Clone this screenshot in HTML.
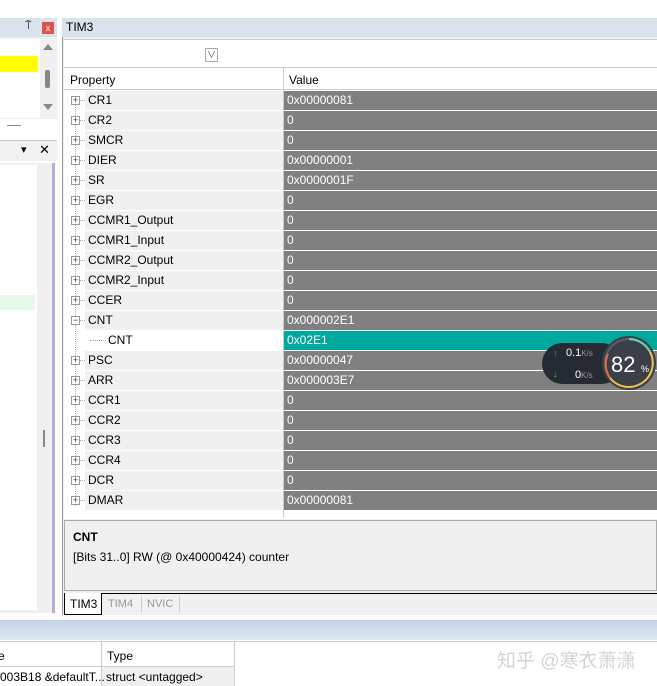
<!DOCTYPE html>
<html><head><meta charset="utf-8"><style>
*{margin:0;padding:0;box-sizing:border-box}
body{width:657px;height:686px;overflow:hidden;background:#fff;position:relative;font-family:"Liberation Sans","Noto Sans CJK SC",sans-serif;font-size:12px;color:#000}
.a{position:absolute}
.row{position:absolute;left:62px;width:595px;height:20px}
.row .ic{position:absolute;left:71px}
.nm{position:absolute;left:85px;width:198px;height:19px;background:#f0f0f0;padding-left:3px;line-height:19px}
.val{position:absolute;left:284px;width:373px;height:19px;background:#808080;color:#fff;padding-left:3px;line-height:19px}
.pl{position:absolute;left:71px;width:9px;height:9px;border:1px solid #999;background:#fff;font-size:9px;line-height:7px;text-align:center;color:#333}
</style></head><body>
<!-- left panel -->
<div class="a" style="left:0;top:18px;width:57px;height:19px;background:#dae2ec"></div>
<div class="a" style="left:25px;top:20px;font-size:11px">&#x2351;</div>
<div class="a" style="left:42px;top:22px;width:12px;height:12px;background:#d9534f;color:#fff;font-size:9px;line-height:12px;text-align:center">x</div>
<div class="a" style="left:0;top:37px;width:57px;height:82px;background:#f0f0f0"></div>
<div class="a" style="left:0;top:39px;width:40px;height:79px;background:#fff"></div>
<div class="a" style="left:0;top:56px;width:38px;height:16px;background:#ffff00"></div>
<div class="a" style="left:43px;top:44px;width:0;height:0;border:5px solid transparent;border-bottom:6px solid #888;border-top:0"></div>
<div class="a" style="left:45px;top:70px;width:5px;height:18px;background:#888;border-radius:2px"></div>
<div class="a" style="left:43px;top:104px;width:0;height:0;border:5px solid transparent;border-top:6px solid #888;border-bottom:0"></div>
<div class="a" style="left:7px;top:125px;width:14px;height:1px;background:#888"></div>
<div class="a" style="left:0;top:140px;width:57px;height:21px;background:#f2f2f2;border-top:1px solid #ccc"></div>
<div class="a" style="left:21px;top:143px;font-size:11px">&#x25BE;</div>
<div class="a" style="left:39px;top:142px;font-size:13px">&#x2715;</div>
<div class="a" style="left:0;top:163px;width:55px;height:450px;background:#f0f0f0;border-right:3px solid #b7aed0"></div>
<div class="a" style="left:0;top:165px;width:37px;height:445px;background:#fff"></div>
<div class="a" style="left:0;top:295px;width:35px;height:15px;background:#e6f9e6"></div>
<div class="a" style="left:43px;top:430px;width:2px;height:17px;background:#888"></div>
<!-- main panel -->
<div class="a" style="left:62px;top:18px;width:595px;height:19px;background:#dae2ec;padding-left:4px;line-height:19px">TIM3</div>
<div class="a" style="left:62px;top:37px;width:595px;height:578px;background:#f0f0f0;border-left:1px solid #999"></div>
<div class="a" style="left:64px;top:39px;width:593px;height:480px;background:#fff;border-top:1px solid #ccc"></div>
<div class="a" style="left:205px;top:48px;width:13px;height:14px;border:1px solid #aaa;background:#fff;font-size:9px;text-align:center;line-height:12px;color:#555">&#x2228;</div>
<div class="a" style="left:64px;top:67px;width:593px;height:23px;border-top:1px solid #ccc;border-bottom:1px solid #ccc"></div>
<div class="a" style="left:70px;top:73px">Property</div>
<div class="a" style="left:289px;top:73px">Value</div>
<div class="a" style="left:283px;top:68px;width:1px;height:450px;background:#ccc"></div>
<div class="a" style="left:75px;top:96px;width:0;height:410px;border-left:1px dotted #aaa"></div>
<div id="rows"></div>
<!-- description -->
<div class="a" style="left:64px;top:520px;width:593px;height:71px;background:#f0f0f0;border:1px solid #aaa"></div>
<div class="a" style="left:73px;top:530px;font-weight:bold">CNT</div>
<div class="a" style="left:73px;top:550px">[Bits 31..0] RW (@ 0x40000424) counter</div>
<div class="a" style="left:64px;top:593px;width:593px;height:1px;background:#000"></div>
<div class="a" style="left:64px;top:593px;width:38px;height:22px;background:#fff;border:1px solid #000;border-top:0;padding-left:5px;line-height:22px">TIM3</div>
<div class="a" style="left:108px;top:598px;color:#999;font-size:11px">TIM4</div>
<div class="a" style="left:141px;top:596px;width:1px;height:16px;background:#ccc"></div>
<div class="a" style="left:147px;top:598px;color:#999;font-size:11px">NVIC</div>
<div class="a" style="left:179px;top:596px;width:1px;height:16px;background:#ccc"></div>
<!-- bottom -->
<div class="a" style="left:0;top:620px;width:657px;height:20px;background:linear-gradient(#c3d3e6,#dfe8f2)"></div>
<div class="a" style="left:0;top:641px;width:657px;height:45px;background:#fff;border-top:1px solid #ccc"></div>
<div class="a" style="left:0;top:666px;width:235px;height:1px;background:#ccc"></div>
<div class="a" style="left:101px;top:642px;width:1px;height:44px;background:#ccc"></div>
<div class="a" style="left:234px;top:642px;width:1px;height:44px;background:#ccc"></div>
<div class="a" style="left:102px;top:667px;width:132px;height:19px;background:#f0f0f0"></div>
<div class="a" style="left:-2px;top:649px">e</div>
<div class="a" style="left:107px;top:649px">Type</div>
<div class="a" style="left:0;top:670px">003B18 &amp;defaultT...</div>
<div class="a" style="left:106px;top:670px">struct &lt;untagged&gt;</div>
<div class="a" style="left:497px;top:646px;font-size:19px;color:#d4d4d4">知乎 @寒衣萧潇</div>
<!-- net widget -->
<div class="a" style="left:542px;top:343px;width:80px;height:41px;background:#262b33;border-radius:21px"></div>
<div class="a" style="left:553px;top:348px;color:#4aa3df;font-size:9px">&#x2191;</div>
<div class="a" style="left:566px;top:347px;color:#fff;font-size:11px">0.1<span style="font-size:8px;color:#999">K/s</span></div>
<div class="a" style="left:553px;top:369px;color:#4c4;font-size:9px">&#x2193;</div>
<div class="a" style="left:575px;top:369px;color:#fff;font-size:11px">0<span style="font-size:8px;color:#999">K/s</span></div>
<svg class="a" style="left:600px;top:334px" width="58" height="58"><circle cx="29" cy="29" r="27" fill="#3a3f48"/><circle cx="29" cy="29" r="24" fill="none" stroke="#5a5f68" stroke-width="2"/><path d="M29 5 A24 24 0 1 1 10 44" fill="none" stroke="#e8c24a" stroke-width="2"/><path d="M29 5 A24 24 0 0 1 50 18" fill="none" stroke="#5fd0b8" stroke-width="2"/><path d="M10 44 A24 24 0 0 1 8 20" fill="none" stroke="#e06a4a" stroke-width="2"/><text x="11" y="38" fill="#fff" font-size="22" font-family="Liberation Sans">82</text><text x="41" y="38" fill="#fff" font-size="9" font-family="Liberation Sans">%</text></svg>
<script>
var d=[["CR1","0x00000081"],["CR2","0"],["SMCR","0"],["DIER","0x00000001"],["SR","0x0000001F"],["EGR","0"],["CCMR1_Output","0"],["CCMR1_Input","0"],["CCMR2_Output","0"],["CCMR2_Input","0"],["CCER","0"],["CNT","0x000002E1"],["*CNT","0x02E1"],["PSC","0x00000047"],["ARR","0x000003E7"],["CCR1","0"],["CCR2","0"],["CCR3","0"],["CCR4","0"],["DCR","0"],["DMAR","0x00000081"]];
var h="";
d.forEach(function(r,i){var y=91+i*20;
if(r[0][0]=="*"){h+='<div class="a" style="left:85px;top:'+y+'px;width:198px;height:19px;background:#fff;padding-left:23px;line-height:19px">'+r[0].slice(1)+'</div><div class="a" style="left:90px;top:'+(y+9)+'px;width:16px;border-top:1px dotted #aaa"></div><div class="val" style="top:'+y+'px;background:#00a99d">'+r[1]+'</div>';}
else{h+='<div class="nm" style="top:'+y+'px">'+r[0]+'</div><div class="pl" style="top:'+(y+5)+'px">'+(r[0]=="CNT"?"−":"+")+'</div><div class="a" style="left:80px;top:'+(y+9)+'px;width:5px;border-top:1px dotted #aaa"></div><div class="val" style="top:'+y+'px">'+r[1]+'</div>';}
});
document.getElementById("rows").innerHTML=h;
</script>
</body></html>
